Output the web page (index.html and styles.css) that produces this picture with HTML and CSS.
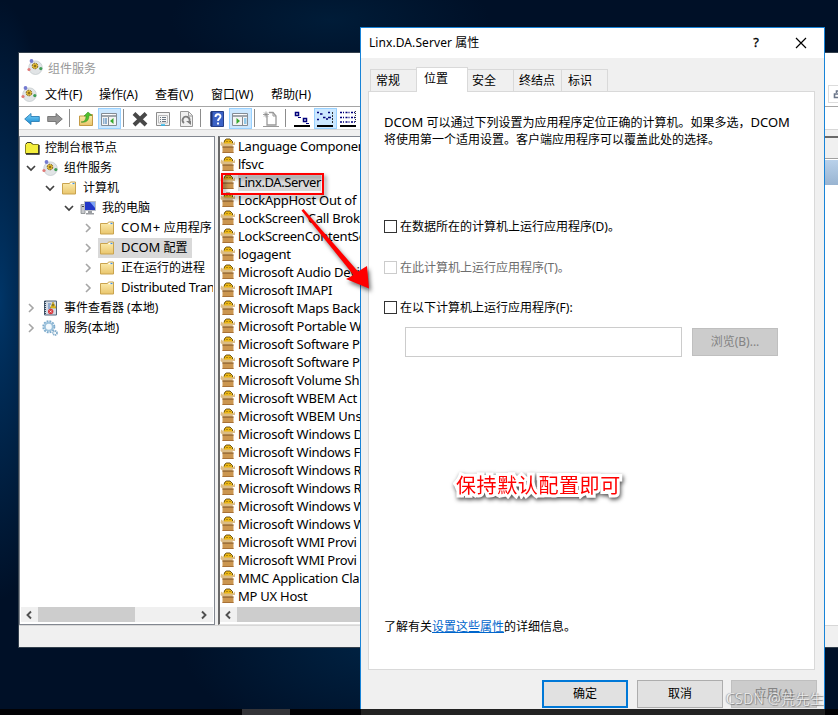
FILE: index.html
```html
<!DOCTYPE html>
<html lang="zh-CN">
<head>
    <meta charset="UTF-8">
    <title>组件服务</title>
    <link rel="stylesheet" href="styles.css">
</head>
<body>
<!-- shared icons -->
<svg class="defs" width="0" height="0">
    <linearGradient id="g-blue" x1="0" y1="0" x2="0" y2="1"><stop offset="0" stop-color="#7fd4fa"/><stop offset="1" stop-color="#1287d0"/></linearGradient>
    <linearGradient id="g-fold" x1="0" y1="0" x2="0" y2="1"><stop offset="0" stop-color="#fdeeb0"/><stop offset="1" stop-color="#e9c56c"/></linearGradient>
    <symbol id="i-com" viewBox="0 0 16 16">
        <circle cx="8.5" cy="8.7" r="6.8" fill="#e1e4e6" stroke="#bfc5c9" stroke-width=".7"/>
        <circle cx="8" cy="7" r="2.800" fill="#f7cf3a" stroke="#6f5410" stroke-width=".9" stroke-dasharray="2 .8"/>
        <path d="M8 5.500v3M6.500 7h3" stroke="#5d4613" stroke-width=".9"/>
        <circle cx="4.5" cy="2" r="1.900" fill="#747bd0"/>
        <circle cx="2" cy="10.5" r="1.6" fill="#e07a78"/>
        <circle cx="13.8" cy="9.6" r="1.6" fill="#3f9d56"/>
    </symbol>
    <symbol id="i-folder" viewBox="0 0 16 16">
        <path d="M1.5 3.5h7l1-1.5h5v12h-13z" fill="url(#g-fold)" stroke="#c9a34e"/>
        <path d="M9.5 3.5h4" stroke="#fff" stroke-width="1.4"/>
        <path d="M11.5 3.5h2" stroke="#3f8fe0" stroke-width="1.2"/>
    </symbol>
    <symbol id="i-root" viewBox="0 0 16 16">
        <path d="M1.5 4.5l1.5-2h4l1.5 2h6v9h-13z" fill="#f4ee3c" stroke="#8a8420"/>
        <path d="M15 5v9H2" fill="none" stroke="#222" stroke-width="1.3"/>
        <path d="M2 4l1.5-1.5H7L8.5 4" fill="none" stroke="#333"/>
    </symbol>
    <symbol id="i-pc" viewBox="0 0 16 16">
        <path d="M1 4.5h4v9H1z" fill="#c7c9cc" stroke="#84888c" stroke-width=".8"/>
        <path d="M2 6.5h2" stroke="#444"/>
        <path d="M4.5 1.5h11v9h-11z" fill="#2238c8" stroke="#b9bdc4"/>
        <path d="M10 2h5v6z" fill="#7fa4f4"/>
        <path d="M8 11h4v2H8zM6 13h8v1.4H6z" fill="#9b9ea2"/>
    </symbol>
    <symbol id="i-event" viewBox="0 0 16 16">
        <path d="M2.500 1h12v14h-12z" fill="#d4dbe5" stroke="#516378"/>
        <path d="M3 1v14" stroke="#34495e" stroke-width="2" stroke-dasharray="1 1"/>
        <path d="M6 4h3M6 6h2M6 8h3" stroke="#4c78b5"/>
        <path d="M11 2l3 6H8.500z" fill="#f6cb1c" stroke="#a88609" stroke-width=".6"/>
        <path d="M11 4v2.500" stroke="#333"/>
        <circle cx="8.700" cy="11.500" r="2.700" fill="#d9363b"/>
        <path d="M7.700 10.500l2 2m0-2l-2 2" stroke="#fff" stroke-width=".7"/>
    </symbol>
    <symbol id="i-gear" viewBox="0 0 16 16">
        <circle cx="6.800" cy="6.800" r="5.500" fill="none" stroke="#7aa9cb" stroke-width="2" stroke-dasharray="1.800 1.080"/>
        <circle cx="6.800" cy="6.800" r="4" fill="#f3f9fd" stroke="#9dc2dc" stroke-width="2"/>
        <circle cx="13" cy="13" r="2" fill="#fff" stroke="#86aecb" stroke-width="1.800" stroke-dasharray="1.200 .5"/>
    </symbol>
    <symbol id="i-box" viewBox="0 0 16 16">
        <path d="M3.500 6L4 3 6 1h4l3 3v2z" fill="#edb814"/>
        <path d="M4 4.500L5 2l1.500-1h3.500l2.500 2.500V5M6.500 3.500h1M9.500 3.500h1" fill="none" stroke="#5c4410" stroke-width=".9"/>
        <path d="M1 3.500l3 2h9l2-2v3.500h-2l-1 2H3L.5 7z" fill="#dcbc86"/>
        <path d="M2.500 8.500h11v6.500h-11z" fill="#cb9650"/>
        <path d="M2.500 8.500h11v1.200h-11z" fill="#8d6233"/>
        <path d="M2.500 14.500h11" stroke="#a87137"/>
    </symbol>
    <symbol id="i-down" viewBox="0 0 10 10"><path d="M1 3l4 4 4-4" fill="none" stroke="#404040" stroke-width="1.700"/></symbol>
    <symbol id="i-right" viewBox="0 0 10 10"><path d="M3 1l4 4-4 4" fill="none" stroke="#a6a6a6" stroke-width="1.600"/></symbol>
    <symbol id="i-sleft" viewBox="0 0 10 10"><path d="M7 1.500L3.500 5 7 8.500" fill="none" stroke="#505050" stroke-width="1.900"/></symbol>
    <symbol id="i-sright" viewBox="0 0 10 10"><path d="M3 1.500L6.500 5 3 8.500" fill="none" stroke="#505050" stroke-width="1.900"/></symbol>
</svg>

<div class="window console">
    <div class="title">
        <svg class="icon"><use href="#i-com"/></svg>
        <span>组件服务</span>
    </div>
    <div class="menu">
        <svg class="icon"><use href="#i-com"/></svg>
        <span>文件(F)</span>
        <span>操作(A)</span>
        <span>查看(V)</span>
        <span>窗口(W)</span>
        <span>帮助(H)</span>
        <span class="mdi">
            <svg width="12" height="16"><path d="M4.500 7V5h7M2.500 8h9v3.500h-9z" fill="none" stroke="#6b7689" stroke-width="1.600"/></svg>
        </span>
    </div>
    <div class="toolbar">
        <span class="tool"><svg class="icon"><path d="M.7 8L7 2.500v3h8.300v5H7v3z" fill="url(#g-blue)" stroke="#2b7fb5" stroke-width=".9"/></svg></span>
        <span class="tool"><svg class="icon"><path d="M15.300 8L9 2.500v3H.7v5H9v3z" fill="#969696" stroke="#707070" stroke-width=".9"/></svg></span>
        <i class="sep"></i>
        <span class="tool"><svg class="icon"><path d="M1.500 5h6l1-1.500h6v11h-13z" fill="url(#g-fold)" stroke="#c49b45"/><path d="M3 11c4 0 5-3 5-6H6l4-4 4 3.500h-3c0 5-3 7.500-8 6.500z" fill="#4fc02d" stroke="#35861f" stroke-width=".5"/></svg></span>
        <span class="tool on"><svg class="icon"><path d="M.5 2.500h15v12H.5z" fill="#f4f4f4" stroke="#848c94"/><path d="M1 5h14" stroke="#848c94" stroke-width="1.500"/><path d="M2 3.500h9" stroke="#fff"/><path d="M7.500 6v8" stroke="#848c94"/><path d="M2 8h1.500M4 8h2M2 10h1.500M4 10h2M2 12h1.500M4 12h2" stroke="#2d6fae"/><path d="M12.500 7v6L9 10z" fill="#36a82d"/></svg></span>
        <i class="sep"></i>
        <span class="tool"><svg class="icon"><path d="M2 2.500l12 11.500M14 2.500L2 14" stroke="#484848" stroke-width="4"/></svg></span>
        <span class="tool"><svg class="icon"><path d="M1.500 1.500h13v13h-13z" fill="#f5f5f5" stroke="#8c8c8c"/><path d="M3.500 4.500h9v7.500h-9z" fill="none" stroke="#bbb"/><path d="M5 6.500h1M7 6.500h4M5 8.500h1M7 8.500h4M5 10.500h1M7 10.500h4" stroke="#6b7783"/><path d="M6 14h4" stroke="#29b8ef" stroke-width="1.500"/></svg></span>
        <span class="tool"><svg class="icon"><path d="M2.500.5h8l4 4v11h-12z" fill="#f0f0f0" stroke="#999"/><path d="M10.500 1v4h4" fill="none" stroke="#999"/><path d="M6 12a3.500 3.500 0 1 1 5.500-2" fill="none" stroke="#7d7d7d" stroke-width="1.800"/><path d="M8 10h5v4z" fill="#7d7d7d"/></svg></span>
        <i class="sep"></i>
        <span class="tool"><svg class="icon"><path d="M2 .5h12.500v15H2z" fill="#3b62c6" stroke="#263f87"/><path d="M2.500 1v14" stroke="#1c2f6d" stroke-width="2"/><path d="M6.500 6c0-3.500 5-3.500 5-.5 0 2-2.500 2-2.500 4.500M9 11.500v2" fill="none" stroke="#fff" stroke-width="1.900"/></svg></span>
        <span class="tool on"><svg class="icon"><path d="M.5 2.500h15v12H.5z" fill="#f4f4f4" stroke="#848c94"/><path d="M1 5h14" stroke="#848c94" stroke-width="1.500"/><path d="M2 3.500h9" stroke="#fff"/><path d="M10.500 6v8" stroke="#848c94"/><path d="M12 8h2.500M12 10h2.500M12 12h2.500" stroke="#2d9fe0"/><path d="M4.500 7v6L8 10z" fill="#36a82d"/></svg></span>
        <i class="sep"></i>
        <span class="tool"><svg class="icon"><path d="M4 4.500V14h9V5l-3-3.500H6" fill="#fff" stroke="#999" stroke-width="1.300"/><path d="M10 1v4h3" fill="none" stroke="#999"/><path d="M0 3.500h6M3 .5v6M1 1.500l4 4M5 1.500l-4 4" stroke="#888" stroke-width=".8"/><path d="M0 15.500h16" stroke="#999"/></svg></span>
        <i class="sep"></i>
        <span class="tool"><svg class="icon"><path d="M1.500 1.500h3v3h-3zM9.500 7.500h3v3h-3z" fill="none" stroke="#00007b" stroke-width="1.500"/><path d="M4 6.500h3M12 12.500h3" stroke="#00007b"/><path d="M0 15h16" stroke="#000" stroke-width="2"/></svg></span>
        <span class="tool on"><svg class="icon"><path d="M0 1.500h2M3 3h2.500M11 1.500h2M0 8.500h2M6 6.500h2.500M9 8h2M11 6.500h3" stroke="#00007b" stroke-width="1.500"/><path d="M15.500 1v11" stroke="#333" stroke-dasharray="2 1"/><path d="M0 15h16" stroke="#000" stroke-width="2"/></svg></span>
        <span class="tool"><svg class="icon"><path d="M0 1.500h16M0 6.500h16M0 11h16" stroke="#00007b" stroke-width="1.500" stroke-dasharray="2 1 1 1.500"/><path d="M15.500 0v12" stroke="#333" stroke-dasharray="1 1"/><path d="M0 15h16" stroke="#000" stroke-width="2"/></svg></span>
    </div>

    <div class="panes">
        <div class="pane tree">
            <div class="rows">
                <div class="node root"><svg class="icon"><use href="#i-root"/></svg><span>控制台根节点</span></div>
                <div class="node"><svg class="chev"><use href="#i-down"/></svg><svg class="icon"><use href="#i-com"/></svg><span>组件服务</span></div>
                <div class="node l2"><svg class="chev"><use href="#i-down"/></svg><svg class="icon"><use href="#i-folder"/></svg><span>计算机</span></div>
                <div class="node l3"><svg class="chev"><use href="#i-down"/></svg><svg class="icon"><use href="#i-pc"/></svg><span>我的电脑</span></div>
                <div class="node l4"><svg class="chev"><use href="#i-right"/></svg><svg class="icon"><use href="#i-folder"/></svg><span><b class="wide">COM+</b> 应用程序</span></div>
                <div class="node l4 selected"><svg class="chev"><use href="#i-right"/></svg><svg class="icon"><use href="#i-folder"/></svg><span><b>DCOM</b> 配置</span></div>
                <div class="node l4"><svg class="chev"><use href="#i-right"/></svg><svg class="icon"><use href="#i-folder"/></svg><span>正在运行的进程</span></div>
                <div class="node l4"><svg class="chev"><use href="#i-right"/></svg><svg class="icon"><use href="#i-folder"/></svg><span><b class="tight">Distributed Tran</b></span></div>
                <div class="node"><svg class="chev"><use href="#i-right"/></svg><svg class="icon"><use href="#i-event"/></svg><span>事件查看器 (本地)</span></div>
                <div class="node"><svg class="chev"><use href="#i-right"/></svg><svg class="icon"><use href="#i-gear"/></svg><span>服务(本地)</span></div>
            </div>
            <div class="scrollbar">
                <svg class="arrow"><use href="#i-sleft"/></svg>
                <div class="track"><div class="thumb"></div></div>
                <svg class="arrow"><use href="#i-sright"/></svg>
            </div>
        </div>
        <div class="pane list">
            <ul class="rows">
                <li><svg class="icon"><use href="#i-box"/></svg>Language Component</li>
                <li><svg class="icon"><use href="#i-box"/></svg>lfsvc</li>
                <li class="selected"><svg class="icon"><use href="#i-box"/></svg><span>Linx.DA.Server</span></li>
                <li><svg class="icon"><use href="#i-box"/></svg>LockAppHost Out of</li>
                <li><svg class="icon"><use href="#i-box"/></svg>LockScreen Call Brok</li>
                <li><svg class="icon"><use href="#i-box"/></svg>LockScreenContentSe</li>
                <li><svg class="icon"><use href="#i-box"/></svg>logagent</li>
                <li><svg class="icon"><use href="#i-box"/></svg>Microsoft Audio Devi</li>
                <li><svg class="icon"><use href="#i-box"/></svg>Microsoft IMAPI</li>
                <li><svg class="icon"><use href="#i-box"/></svg>Microsoft Maps Back</li>
                <li><svg class="icon"><use href="#i-box"/></svg>Microsoft Portable W</li>
                <li><svg class="icon"><use href="#i-box"/></svg>Microsoft Software P</li>
                <li><svg class="icon"><use href="#i-box"/></svg>Microsoft Software P</li>
                <li><svg class="icon"><use href="#i-box"/></svg>Microsoft Volume Sh</li>
                <li><svg class="icon"><use href="#i-box"/></svg>Microsoft WBEM Act</li>
                <li><svg class="icon"><use href="#i-box"/></svg>Microsoft WBEM Uns</li>
                <li><svg class="icon"><use href="#i-box"/></svg>Microsoft Windows D</li>
                <li><svg class="icon"><use href="#i-box"/></svg>Microsoft Windows F</li>
                <li><svg class="icon"><use href="#i-box"/></svg>Microsoft Windows R</li>
                <li><svg class="icon"><use href="#i-box"/></svg>Microsoft Windows R</li>
                <li><svg class="icon"><use href="#i-box"/></svg>Microsoft Windows W</li>
                <li><svg class="icon"><use href="#i-box"/></svg>Microsoft Windows W</li>
                <li><svg class="icon"><use href="#i-box"/></svg>Microsoft WMI Provi</li>
                <li><svg class="icon"><use href="#i-box"/></svg>Microsoft WMI Provi</li>
                <li><svg class="icon"><use href="#i-box"/></svg>MMC Application Cla</li>
                <li><svg class="icon"><use href="#i-box"/></svg>MP UX Host</li>
            </ul>
            <div class="scrollbar">
                <svg class="arrow"><use href="#i-sleft"/></svg>
                <div class="track"><div class="thumb full"></div></div>
            </div>
        </div>
        <div class="pane actions">
            <div class="actions-head"></div>
            <div class="actions-group"></div>
        </div>
    </div>
    <div class="status"></div>
</div>

<div class="window dialog">
    <div class="dialog-title">
        <span class="name">Linx.DA.Server 属性</span>
        <span class="help">?</span>
        <svg width="12" height="12"><path d="M1 1l10 10M11 1L1 11" stroke="#000" stroke-width="1.200"/></svg>
    </div>
    <div class="tabs">
        <span class="tab t1">常规</span>
        <span class="tab active">位置</span>
        <span class="tab t3">安全</span>
        <span class="tab t4">终结点</span>
        <span class="tab t5">标识</span>
    </div>
    <div class="sheet">
        <p class="intro"><b>DCOM</b> 可以通过下列设置为应用程序定位正确的计算机。如果多选，<b>DCOM</b><br>将使用第一个适用设置。客户端应用程序可以覆盖此处的选择。</p>
        <div class="check"><i></i>在数据所在的计算机上运行应用程序(D)。</div>
        <div class="check disabled"><i></i>在此计算机上运行应用程序(T)。</div>
        <div class="check"><i></i>在以下计算机上运行应用程序(F):</div>
        <div class="browse">
            <div class="field"></div>
            <div class="button disabled">浏览(B)...</div>
        </div>
        <div class="note">保持默认配置即可</div>
        <p class="more">了解有关<a>设置这些属性</a>的详细信息。</p>
    </div>
    <div class="buttons">
        <div class="button primary">确定</div>
        <div class="button">取消</div>
        <div class="button disabled">应用(A)</div>
    </div>
</div>

<div class="taskbar"><span class="task"></span><span class="glass"></span></div>

<!-- annotation: box round the entry and the arrow to the dialog -->
<svg class="marks" width="838" height="715">
    <g class="mark">
        <path d="M222 174h101v20h-101z" fill="none" stroke="#f00" stroke-width="2"/>
        <path d="M301.500 210.500L353.500 275l-7.500 4L369 288.500 367 266l-9 5.500L303.500 209z" fill="#f00"/>
    </g>
</svg>
<div class="watermark">CSDN @荒先生</div>
</body>
</html>
```

FILE: styles.css
```css
* {
    box-sizing: border-box;
}

body {
    margin: 0;
    width: 838px;
    height: 715px;
    overflow: hidden;
    position: relative;
    font-family: "Noto Sans", "Noto Sans CJK SC", sans-serif;
    font-size: 12px;
    color: #000;
    white-space: nowrap;
    background:
        radial-gradient(ellipse 60px 300px at 0 300px, #003567, transparent),
        radial-gradient(ellipse 200px 110px at 380px 640px, #002344, transparent),
        radial-gradient(ellipse 160px 60px at 330px 20px, #001c38, transparent),
        #001027;
}

.defs {
    position: absolute;
}

.window {
    position: absolute;
    display: flex;
    flex-direction: column;
}

.icon {
    width: 16px;
    height: 16px;
    flex: none;
}

/* console window */
.console {
    left: 18px;
    top: 52px;
    width: 840px;
    height: 596px;
    border: 1px solid #33404d;
    background: #fff;
}

.title {
    height: 29px;
    padding-left: 8px;
    display: flex;
    align-items: center;
    gap: 5px;
    color: #999;
}

.title .icon {
    margin-top: -2px;
}

.menu {
    height: 24px;
    padding-left: 2px;
    display: grid;
    grid-template-columns: 24px 54px 56px 56px 60px 557px 20px;
    align-items: center;
}

.mdi {
    height: 18px;
    border: 1px solid #dcdcdc;
    padding-left: 3px;
}

.toolbar {
    height: 24px;
    padding: 1px 0 0 2px;
    border-top: 1px solid #a5a5a5;
    border-bottom: 1px solid #d7d7d7;
    display: flex;
}

.tool {
    width: 23px;
    height: 21px;
    display: flex;
    align-items: center;
    justify-content: center;
}

.tool.on {
    background: #cce8ff;
    border: 1px solid #99d1ff;
}

.tool .icon {
    margin-left: -1px;
}

.sep {
    width: 1px;
    height: 18px;
    margin: 1px 5px 0 2px;
    background: #8c8c8c;
}

.panes {
    height: 495px;
    padding-top: 6px;
    background: #f0f0f0;
    display: flex;
}

.pane {
    display: flex;
    flex-direction: column;
    background: #fff;
    overflow: hidden;
}

.tree {
    width: 196px;
    border: 1px solid #828790;
    margin-right: 3px;
    padding: 1px 1px 1px 0;
}

.rows {
    flex: 1;
    overflow: hidden;
}

.node {
    height: 20px;
    line-height: 20px;
    padding-left: 2px;
    display: flex;
    align-items: center;
}

.node .icon {
    margin-left: 1px;
}

.node span {
    height: 20px;
    padding: 0 4px 0 6px;
}

.node.root .icon {
    margin-left: 2px;
}

.node.root span {
    padding-left: 5px;
}

.node.l2 {
    padding-left: 21px;
}

.node.l3 {
    padding-left: 40px;
}

.node.l4 {
    padding-left: 59px;
}

.node.selected span {
    background: #d9d9d9;
}

.node.selected .icon {
    height: 20px;
    background: #d9d9d9;
    box-shadow: -1px 0 #d9d9d9;
}

/* latin names run a little larger than the chinese text */
b {
    font-size: 13px;
    font-weight: normal;
    line-height: 1;
}

b.wide {
    letter-spacing: 0.6px;
}

b.tight {
    letter-spacing: -0.35px;
}

.chev {
    width: 10px;
    height: 10px;
    margin: 0 5px 0 4px;
    flex: none;
}

.scrollbar {
    height: 15px;
    margin: 0 0 1px 1px;
    background: #f0f0f0;
    display: flex;
    align-items: center;
}

.arrow {
    width: 10px;
    height: 10px;
    margin: 0 4px 0 3px;
}

.track {
    flex: 1;
    height: 15px;
}

.thumb {
    width: 97px;
    height: 15px;
    background: #cdcdcd;
}

.thumb.full {
    width: 100%;
}

.list {
    width: 586px;
    border: 1px solid #828790;
    border-left: 2px solid #696969;
    border-bottom-color: #e3e3e3;
    padding: 0 0 1px;
}

.list .scrollbar {
    margin-left: 0;
}

.list ul {
    list-style: none;
    margin: 0;
    padding: 0;
}

.list li {
    height: 18px;
    line-height: 18px;
    font-size: 13px;
    letter-spacing: -0.24px;
    display: flex;
    align-items: center;
    gap: 2px;
}

.list .selected span {
    background: #d9d9d9;
    letter-spacing: -0.42px;
}

.actions {
    flex: 1;
    margin-left: 2px;
    border-top: 2px solid #696969;
}

.actions-head {
    height: 21px;
    background: #f0f0f0;
    border-bottom: 1px solid #a0a0a0;
}

.actions-group {
    height: 25px;
    margin-top: 1px;
    background: linear-gradient(#b9d1ea, #99b4d1);
}

.status {
    flex: 1;
    background: #f0f0f0;
    border-top: 1px solid #d7d7d7;
}

/* properties dialog */
.dialog {
    left: 360px;
    top: 27px;
    width: 465px;
    height: 690px;
    border: 1px solid #1883d7;
    background: #f0f0f0;
}

.dialog-title {
    height: 30px;
    padding: 0 17px 0 8px;
    background: #fff;
    display: flex;
    align-items: center;
}

.dialog-title .name {
    flex: 1;
    margin-top: -2px;
    letter-spacing: 0.08px;
}

.help {
    font-size: 13px;
    margin: -3px 36px 0 0;
    -webkit-text-stroke: 0.3px #000;
}

.tabs {
    height: 33px;
    padding-left: 9px;
    display: flex;
    align-items: flex-end;
}

.tab {
    height: 22px;
    line-height: 21px;
    padding-left: 5px;
    border: 1px solid #d9d9d9;
    border-width: 1px 1px 0 0;
}

.tab.t1 {
    width: 46px;
    border-width: 1px 0 0 1px;
}

.tab.active {
    width: 52px;
    height: 25px;
    line-height: 22px;
    margin-bottom: -1px;
    padding-left: 7px;
    border-left-width: 1px;
    background: #fff;
    z-index: 1;
}

.tab.t3 {
    width: 46px;
    padding-left: 4px;
}

.tab.t4 {
    width: 48px;
}

.tab.t5 {
    width: 46px;
    padding-left: 6px;
}

.sheet {
    width: 447px;
    height: 579px;
    margin-left: 7px;
    padding: 22px 15px 0;
    border: 1px solid #d9d9d9;
    background: #fff;
}

.sheet p {
    margin: 0;
    line-height: 17px;
}

.intro {
    height: 97px;
}

.check {
    height: 31px;
    margin-bottom: 9.500px;
    line-height: 31px;
    display: flex;
    align-items: center;
}

.check i {
    width: 13px;
    height: 13px;
    margin-right: 3px;
    border: 1px solid #333;
}

.check.disabled {
    color: #6d6d6d;
}

.check.disabled i {
    border-color: #ccc;
}

.browse {
    padding-left: 21px;
    margin-top: -6px;
    display: flex;
    align-items: center;
    gap: 10px;
}

.field {
    width: 277px;
    height: 30px;
    border: 1px solid #ccc;
}

.button {
    width: 86px;
    height: 28px;
    line-height: 26px;
    text-align: center;
    background: #e1e1e1;
    border: 1px solid #adadad;
}

.button.disabled {
    background: #ccc;
    border-color: #bfbfbf;
    color: #838383;
}

.button.primary {
    margin-right: 1px;
    border: 2px solid #0078d7;
    line-height: 24px;
}

.note {
    height: 30px;
    margin: 114px 0 117px 72px;
    line-height: 30px;
    font-size: 20px;
    letter-spacing: 0.6px;
    color: #f00;
    -webkit-text-stroke: 6px #fff;
    stroke-linejoin: round;
    paint-order: stroke fill;
    filter: drop-shadow(1px 2px 2px rgba(0, 0, 0, 0.7));
}

.more a {
    color: #0066cc;
    text-decoration: underline;
}

.buttons {
    padding: 10px 7px 0 0;
    display: flex;
    justify-content: flex-end;
    gap: 8px;
}

/* desktop overlays */
.taskbar {
    position: absolute;
    left: 0;
    top: 709px;
    width: 838px;
    height: 6px;
    padding: 0 13px 0 242px;
    background: #020205;
    display: flex;
    justify-content: space-between;
}

.task {
    width: 48px;
    background: #343438;
}

.glass {
    width: 464px;
    background: #222;
}

.marks {
    position: absolute;
    left: 0;
    top: 0;
}

.mark {
    filter: drop-shadow(2px 3px 2px rgba(0, 0, 0, 0.55));
}

.watermark {
    position: absolute;
    left: 726px;
    top: 688px;
    line-height: 22px;
    font-size: 14px;
    font-weight: 300;
    letter-spacing: 0.4px;
    color: rgba(255, 255, 255, 0.85);
    text-shadow: 1px 1px 1px #777, -1px 0 1px #999;
}
```
